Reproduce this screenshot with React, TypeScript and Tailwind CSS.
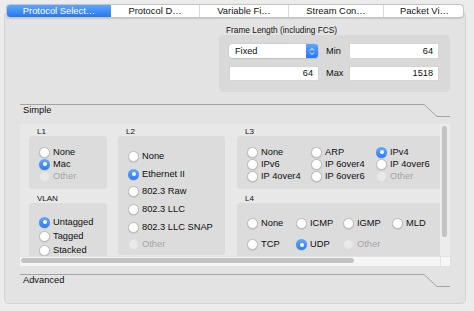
import React from "react";

type RProps = { label: string; checked?: boolean; disabled?: boolean };

function Radio({ label, checked, disabled }: RProps) {
  let circle: React.ReactNode;
  if (checked) {
    circle = (
      <span className="flex h-[11px] w-[11px] shrink-0 items-center justify-center rounded-full bg-gradient-to-b from-[#62a8fb] to-[#2a7cf3] shadow-[0_0.5px_1px_rgba(0,0,0,0.2)]">
        <span className="h-[4px] w-[4px] rounded-full bg-white" />
      </span>
    );
  } else if (disabled) {
    circle = <span className="h-[11px] w-[11px] shrink-0 rounded-full border-[0.5px] border-[#dcdcdc] bg-[#e9e9e9]" />;
  } else {
    circle = (
      <span className="h-[11px] w-[11px] shrink-0 rounded-full border-[0.5px] border-[#bcbcbc] bg-white shadow-[0_0.5px_1px_rgba(0,0,0,0.15)]" />
    );
  }
  return (
    <div className="flex h-full items-center whitespace-nowrap">
      {circle}
      <span className={"ml-[3px] text-[9.3px] leading-[11px] " + (disabled ? "text-[#a6a6a6]" : "text-[#0d0d0d]")}>{label}</span>
    </div>
  );
}

function GroupLabel({ text }: { text: string }) {
  return <div className="h-[8px] pl-[8px] text-[8px] leading-[8px] text-[#111]">{text}</div>;
}

function Header({ text }: { text: string }) {
  return (
    <div className="ml-[15px] flex h-[13px] w-[430px]">
      <div className="flex-1 border-t border-[#a3a3a3] pl-[3px] text-[9.3px] leading-[11px] text-[#0d0d0d]">{text}</div>
      <svg width="26" height="13" className="shrink-0">
        <polyline points="0,0.5 13,12.5 26,12.5" fill="none" stroke="#a3a3a3" strokeWidth="1" />
      </svg>
    </div>
  );
}

const tabs = [
  { t: "Protocol Select…", w: "w-[104px]" },
  { t: "Protocol D…", w: "w-[88px]" },
  { t: "Variable Fi…", w: "w-[89px]" },
  { t: "Stream Con…", w: "w-[95px]" },
  { t: "Packet Vi…", w: "w-[82px]" },
];

export default function App() {
  return (
    <div className="h-[311px] w-[474px] overflow-hidden bg-[#ececec] pt-[4px] font-['Liberation_Sans',Arial,sans-serif] text-[#0d0d0d]">
      {/* Tabs */}
      <div className="relative z-10 ml-[6px] flex h-[14px] w-[458px] overflow-hidden rounded-[4px] border-[0.5px] border-[#c4c4c4] bg-white shadow-[0_0.5px_1px_rgba(0,0,0,0.12)]">
        {tabs.map((tab, i) => (
          <div
            key={tab.t}
            className={
              tab.w +
              " flex h-full shrink-0 items-center justify-center text-[9.4px] leading-[14px] " +
              (i === 0
                ? "bg-gradient-to-b from-[#5ea6fb] to-[#2277f1] text-white"
                : "text-[#111] " + (i > 1 ? "border-l border-[#d9d9d9]" : ""))
            }
          >
            {tab.t}
          </div>
        ))}
      </div>

      {/* Pane */}
      <div className="-mt-[7px] ml-[4px] h-[293px] w-[462px] rounded-[5px] border border-[#d4d4d4] bg-[#e3e3e3] pt-[14px]">
        {/* Frame length */}
        <div className="ml-[214px] w-[231px]">
          <div className="h-[9px] pl-[7px] text-[8.3px] leading-[9px] text-[#111]">Frame Length (including FCS)</div>
          <div className="h-[57px] rounded-[4px] bg-[#d9d9d9] pl-[10px] pt-[9px]">
            <div className="flex h-[14px] items-center">
              <div className="flex h-[14px] w-[89px] items-center rounded-[3px] bg-white shadow-[0_0_0_0.5px_#c6c6c6,0_0.5px_1px_rgba(0,0,0,0.15)]">
                <span className="flex-1 pl-[6px] text-[9.2px] leading-[14px]">Fixed</span>
                <span className="flex h-[14px] w-[12px] items-center justify-center rounded-r-[3px] bg-gradient-to-b from-[#5ea6fb] to-[#2277f1]">
                  <svg width="6" height="9" viewBox="0 0 6 9">
                    <polyline points="1,3.5 3,1.5 5,3.5" fill="none" stroke="white" strokeWidth="1" />
                    <polyline points="1,5.5 3,7.5 5,5.5" fill="none" stroke="white" strokeWidth="1" />
                  </svg>
                </span>
              </div>
              <span className="ml-[8px] w-[24px] text-[9.2px] leading-[14px]">Min</span>
              <div className="h-[14px] w-[88px] bg-white pr-[5px] text-right text-[9.2px] leading-[14px] shadow-[0_0_0_0.5px_#d0d0d0]">64</div>
            </div>
            <div className="mt-[9px] flex h-[13px] items-center">
              <div className="ml-[1px] h-[13px] w-[88px] bg-white pr-[5px] text-right text-[9.2px] leading-[13px] shadow-[0_0_0_0.5px_#d0d0d0]">64</div>
              <span className="ml-[8px] w-[24px] text-[9.2px] leading-[13px]">Max</span>
              <div className="h-[13px] w-[88px] bg-white pr-[5px] text-right text-[9.2px] leading-[13px] shadow-[0_0_0_0.5px_#d0d0d0]">1518</div>
            </div>
          </div>
        </div>

        {/* Simple */}
        <div className="mt-[12px]">
          <Header text="Simple" />
        </div>

        {/* Scroll area */}
        <div className="ml-[15px] mt-[7px] flex h-[142px] w-[430px] flex-col bg-[#e8e8e8]">
          <div className="flex h-[132px]">
            <div className="flex w-[420px] items-start overflow-hidden pl-[9px] pt-[4px]">
              {/* col 1 */}
              <div className="w-[78px] shrink-0">
                <GroupLabel text="L1" />
                <div className="h-[53px] rounded-[3px] bg-[#dcdcdc] pl-[10px] pt-[10px]">
                  <div className="h-[12px]"><Radio label="None" /></div>
                  <div className="h-[12px]"><Radio label="Mac" checked /></div>
                  <div className="h-[12px]"><Radio label="Other" disabled /></div>
                </div>
                <div className="mt-[6px]">
                  <GroupLabel text="VLAN" />
                </div>
                <div className="h-[62px] rounded-[3px] bg-[#dcdcdc] pl-[10px] pt-[12px]">
                  <div className="h-[14px]"><Radio label="Untagged" checked /></div>
                  <div className="h-[14px]"><Radio label="Tagged" /></div>
                  <div className="h-[14px]"><Radio label="Stacked" /></div>
                </div>
              </div>
              {/* col 2 */}
              <div className="ml-[11px] w-[107px] shrink-0">
                <GroupLabel text="L2" />
                <div className="h-[119px] rounded-[3px] bg-[#dcdcdc] pl-[10px] pt-[12px]">
                  <div className="h-[17.6px]"><Radio label="None" /></div>
                  <div className="h-[17.6px]"><Radio label="Ethernet II" checked /></div>
                  <div className="h-[17.6px]"><Radio label="802.3 Raw" /></div>
                  <div className="h-[17.6px]"><Radio label="802.3 LLC" /></div>
                  <div className="h-[17.6px]"><Radio label="802.3 LLC SNAP" /></div>
                  <div className="h-[17.6px]"><Radio label="Other" disabled /></div>
                </div>
              </div>
              {/* col 3 */}
              <div className="ml-[12px] w-[300px] shrink-0">
                <GroupLabel text="L3" />
                <div className="h-[53px] rounded-[3px] bg-[#dcdcdc] pl-[10px] pt-[10px]">
                  <div className="flex h-[12px]">
                    <div className="w-[64px]"><Radio label="None" /></div>
                    <div className="w-[65px]"><Radio label="ARP" /></div>
                    <div><Radio label="IPv4" checked /></div>
                  </div>
                  <div className="flex h-[12px]">
                    <div className="w-[64px]"><Radio label="IPv6" /></div>
                    <div className="w-[65px]"><Radio label="IP 6over4" /></div>
                    <div><Radio label="IP 4over6" /></div>
                  </div>
                  <div className="flex h-[12px]">
                    <div className="w-[64px]"><Radio label="IP 4over4" /></div>
                    <div className="w-[65px]"><Radio label="IP 6over6" /></div>
                    <div><Radio label="Other" disabled /></div>
                  </div>
                </div>
                <div className="mt-[6px]">
                  <GroupLabel text="L4" />
                </div>
                <div className="h-[62px] rounded-[3px] bg-[#dcdcdc] pl-[10px] pt-[10px]">
                  <div className="flex h-[21px]">
                    <div className="w-[49px]"><Radio label="None" /></div>
                    <div className="w-[47px]"><Radio label="ICMP" /></div>
                    <div className="w-[49px]"><Radio label="IGMP" /></div>
                    <div><Radio label="MLD" /></div>
                  </div>
                  <div className="flex h-[21px]">
                    <div className="w-[49px]"><Radio label="TCP" /></div>
                    <div className="w-[47px]"><Radio label="UDP" checked /></div>
                    <div className="w-[49px]"><Radio label="Other" disabled /></div>
                  </div>
                </div>
              </div>
            </div>
            {/* vertical scrollbar */}
            <div className="w-[10px] shrink-0 bg-[#ececec] pl-[2px] pt-[2px]">
              <div className="h-[111px] w-[5px] rounded-full bg-[#c3c3c3]" />
            </div>
          </div>
          {/* horizontal scrollbar */}
          <div className="flex h-[10px]">
            <div className="w-[420px] border-t border-[#e2e2e2] bg-[#f5f5f5] pl-[1px] pt-[1px]">
              <div className="h-[5px] w-[333px] rounded-full bg-[#c3c3c3]" />
            </div>
            <div className="w-[10px] border-l border-t border-[#e2e2e2] bg-[#f7f7f7]" />
          </div>
        </div>

        {/* Advanced */}
        <div className="mt-[8px]">
          <Header text="Advanced" />
        </div>
      </div>
    </div>
  );
}
